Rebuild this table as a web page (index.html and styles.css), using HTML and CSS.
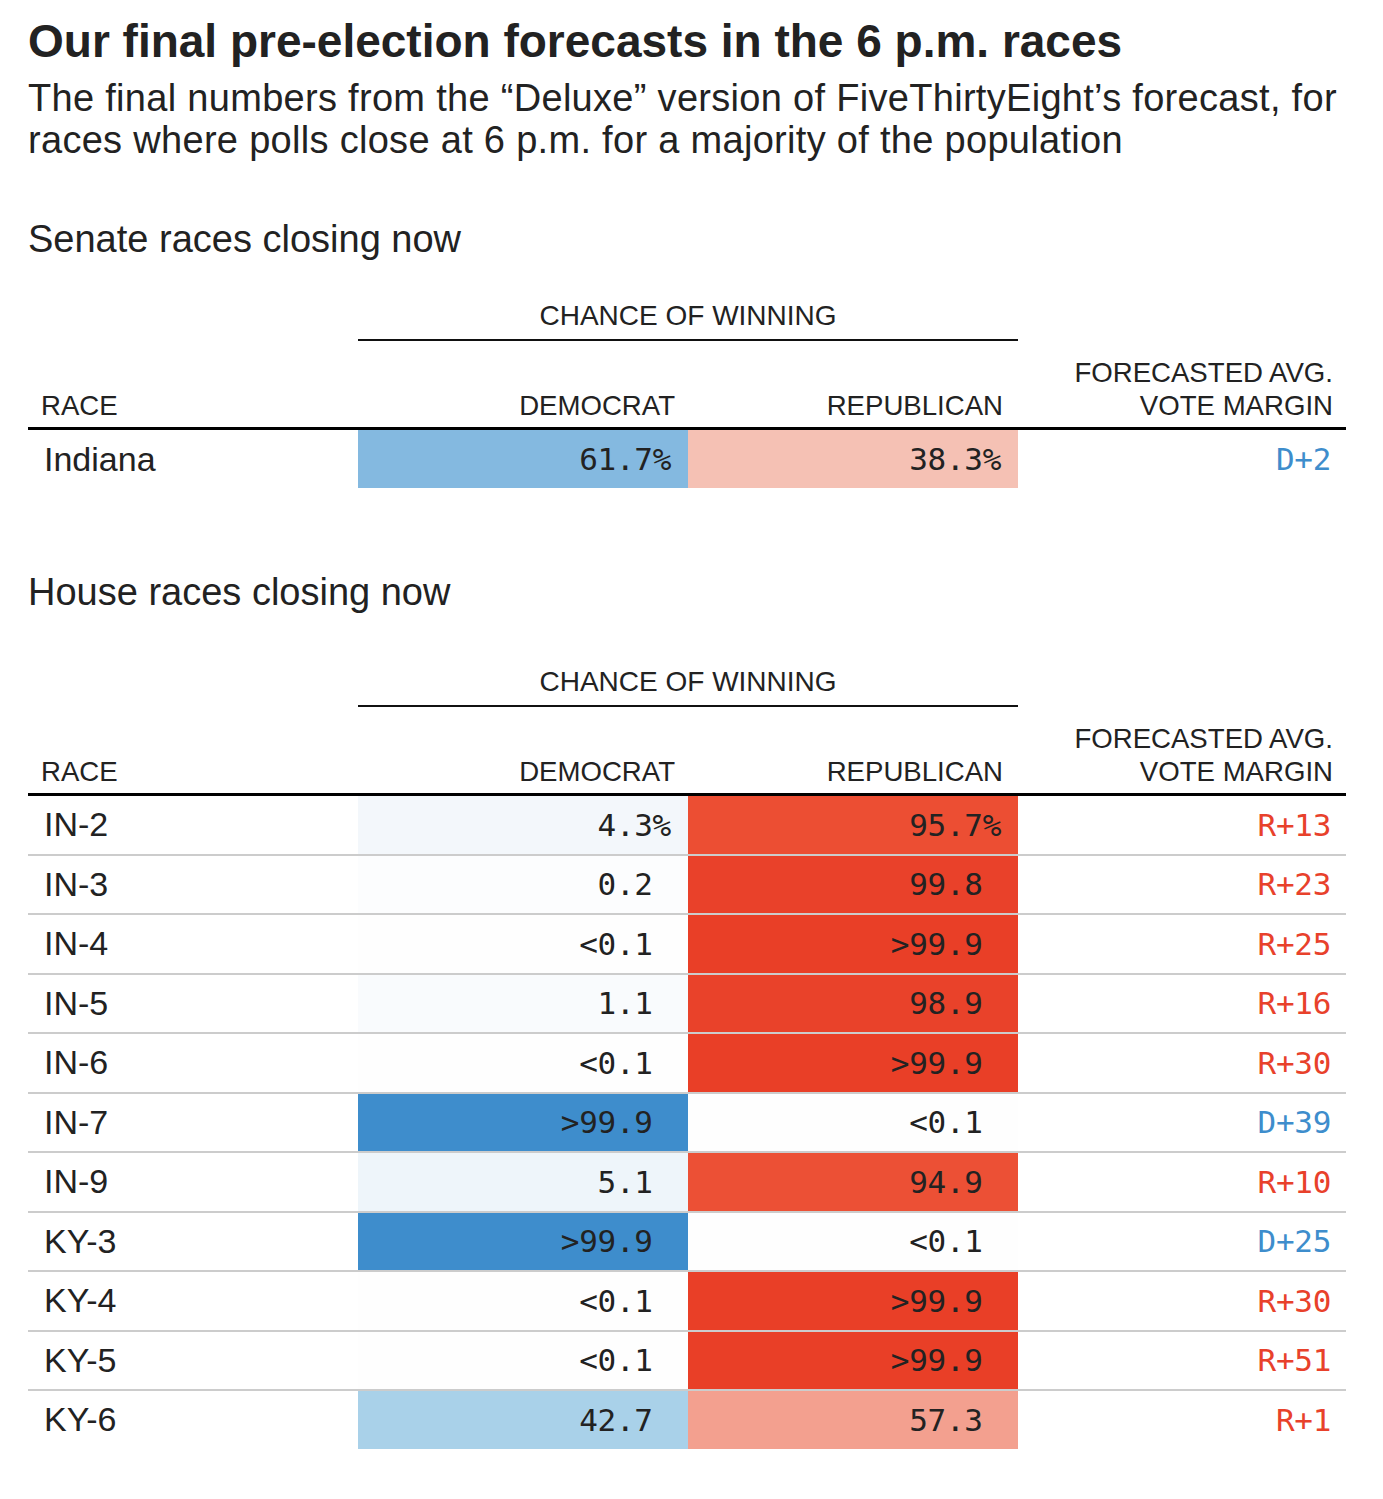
FILE: index.html
```html
<!DOCTYPE html>
<html lang="en">
<head>
<meta charset="utf-8">
<title>Our final pre-election forecasts in the 6 p.m. races</title>
<link rel="stylesheet" href="styles.css">
</head>
<body>
<main class="page">
  <h1 class="title">Our final pre-election forecasts in the 6 p.m. races</h1>
  <p class="dek">The final numbers from the “Deluxe” version of FiveThirtyEight’s forecast, for races where polls close at 6 p.m. for a majority of the population</p>

  <section class="section section-senate">
    <h2 class="section-title">Senate races closing now</h2>
    <table class="forecast">
      <colgroup><col class="c-race"><col class="c-dem"><col class="c-rep"><col class="c-margin"></colgroup>
      <thead>
        <tr class="group-row"><th></th><th class="group" colspan="2">CHANCE OF WINNING</th><th></th></tr>
        <tr class="col-row"><th class="h-race">RACE</th><th class="h-num h-dem">DEMOCRAT</th><th class="h-num h-rep">REPUBLICAN</th><th class="h-margin">FORECASTED AVG.<br>VOTE MARGIN</th></tr>
      </thead>
      <tbody>
        <tr class="senate-row"><td class="race">Indiana</td><td class="num dem" style="background:#84b9e0">61.7%</td><td class="num rep" style="background:#f5c1b4">38.3%</td><td class="margin d">D+2</td></tr>
      </tbody>
    </table>
  </section>

  <section class="section section-house">
    <h2 class="section-title">House races closing now</h2>
    <table class="forecast">
      <colgroup><col class="c-race"><col class="c-dem"><col class="c-rep"><col class="c-margin"></colgroup>
      <thead>
        <tr class="group-row"><th></th><th class="group" colspan="2">CHANCE OF WINNING</th><th></th></tr>
        <tr class="col-row"><th class="h-race">RACE</th><th class="h-num h-dem">DEMOCRAT</th><th class="h-num h-rep">REPUBLICAN</th><th class="h-margin">FORECASTED AVG.<br>VOTE MARGIN</th></tr>
      </thead>
      <tbody>
        <tr><td class="race">IN-2</td><td class="num dem" style="background:#f3f7fb">4.3%</td><td class="num rep" style="background:#ec4e33">95.7%</td><td class="margin r">R+13</td></tr>
        <tr><td class="race">IN-3</td><td class="num dem" style="background:#fcfdfe">0.2<span class="pad">%</span></td><td class="num rep" style="background:#e9412a">99.8<span class="pad">%</span></td><td class="margin r">R+23</td></tr>
        <tr><td class="race">IN-4</td><td class="num dem" style="background:#fefefe">&lt;0.1<span class="pad">%</span></td><td class="num rep" style="background:#e93f27">&gt;99.9<span class="pad">%</span></td><td class="margin r">R+25</td></tr>
        <tr><td class="race">IN-5</td><td class="num dem" style="background:#f9fbfd">1.1<span class="pad">%</span></td><td class="num rep" style="background:#e9422a">98.9<span class="pad">%</span></td><td class="margin r">R+16</td></tr>
        <tr><td class="race">IN-6</td><td class="num dem" style="background:#fefefe">&lt;0.1<span class="pad">%</span></td><td class="num rep" style="background:#e93f27">&gt;99.9<span class="pad">%</span></td><td class="margin r">R+30</td></tr>
        <tr><td class="race">IN-7</td><td class="num dem" style="background:#3e8dcc">&gt;99.9<span class="pad">%</span></td><td class="num rep" style="background:#fefefe">&lt;0.1<span class="pad">%</span></td><td class="margin d">D+39</td></tr>
        <tr><td class="race">IN-9</td><td class="num dem" style="background:#eef5fa">5.1<span class="pad">%</span></td><td class="num rep" style="background:#ec5035">94.9<span class="pad">%</span></td><td class="margin r">R+10</td></tr>
        <tr><td class="race">KY-3</td><td class="num dem" style="background:#3e8dcc">&gt;99.9<span class="pad">%</span></td><td class="num rep" style="background:#fefefe">&lt;0.1<span class="pad">%</span></td><td class="margin d">D+25</td></tr>
        <tr><td class="race">KY-4</td><td class="num dem" style="background:#fefefe">&lt;0.1<span class="pad">%</span></td><td class="num rep" style="background:#e93f27">&gt;99.9<span class="pad">%</span></td><td class="margin r">R+30</td></tr>
        <tr><td class="race">KY-5</td><td class="num dem" style="background:#fefefe">&lt;0.1<span class="pad">%</span></td><td class="num rep" style="background:#e93f27">&gt;99.9<span class="pad">%</span></td><td class="margin r">R+51</td></tr>
        <tr><td class="race">KY-6</td><td class="num dem" style="background:#a9d1e9">42.7<span class="pad">%</span></td><td class="num rep" style="background:#f3a08f">57.3<span class="pad">%</span></td><td class="margin r">R+1</td></tr>
      </tbody>
    </table>
  </section>
</main>
</body>
</html>
```

FILE: styles.css
```css
html, body {
  margin: 0;
  padding: 0;
  background: #ffffff;
}

body {
  font-family: "Liberation Sans", Arial, sans-serif;
  color: #222222;
}

.page {
  width: 1318px;
  padding: 15px 37px 40px 28px;
}

.title {
  margin: 0;
  font-family: "Liberation Sans Narrow", "Liberation Sans", sans-serif;
  font-size: 46px;
  line-height: 52px;
  font-weight: 700;
  color: #222222;
}

.dek {
  margin: 10px 0 0;
  font-size: 38px;
  line-height: 42px;
  letter-spacing: 0.3px;
  color: #222222;
}

.section-title {
  margin: 0;
  font-size: 38px;
  line-height: 44px;
  font-weight: 400;
  color: #222222;
}

.section-senate {
  margin-top: 56px;
}

.section-house {
  margin-top: 82px;
}

.forecast {
  width: 1318px;
  table-layout: fixed;
  border-collapse: collapse;
  border-spacing: 0;
  margin-top: 39px;
}

.section-house .forecast {
  margin-top: 52px;
}

.c-race, .c-dem, .c-rep { width: 330px; }
.c-margin { width: 328px; }

.forecast th {
  font-weight: 400;
  font-size: 27.6px;
  line-height: 33px;
  color: #222222;
  padding: 0;
}

.group-row th {
  line-height: 32px;
  padding-bottom: 7px;
}

.group-row th.group {
  font-size: 28px;
  text-align: center;
  border-bottom: 2px solid #111111;
}

.col-row th {
  padding-top: 16px;
  padding-bottom: 5px;
  vertical-align: bottom;
  border-bottom: 3px solid #000000;
}

.h-race {
  text-align: left;
  padding-left: 13px !important;
}

.h-num, .h-margin {
  text-align: right;
}

.h-dem { padding-right: 13px !important; }
.h-rep { padding-right: 15px !important; }
.h-margin { padding-right: 13px !important; }

.forecast td {
  height: 57.5px;
  padding: 0;
  vertical-align: middle;
}

.senate-row td {
  height: 58px;
}

.forecast tbody tr + tr td {
  border-top: 2px solid #cccccc;
}

.race {
  padding-left: 16px !important;
  font-size: 34px;
  color: #222222;
}

.num, .margin {
  font-family: "DejaVu Sans Mono", "Liberation Mono", monospace;
  font-size: 31px;
  letter-spacing: -0.3px;
  text-align: right;
  white-space: nowrap;
}

.num {
  padding-right: 17px !important;
  color: #222222;
}

.margin {
  padding-right: 15px !important;
}

.margin.r { color: #e8412b; }
.margin.d { color: #3e8dcc; }

.pad {
  visibility: hidden;
}
```
